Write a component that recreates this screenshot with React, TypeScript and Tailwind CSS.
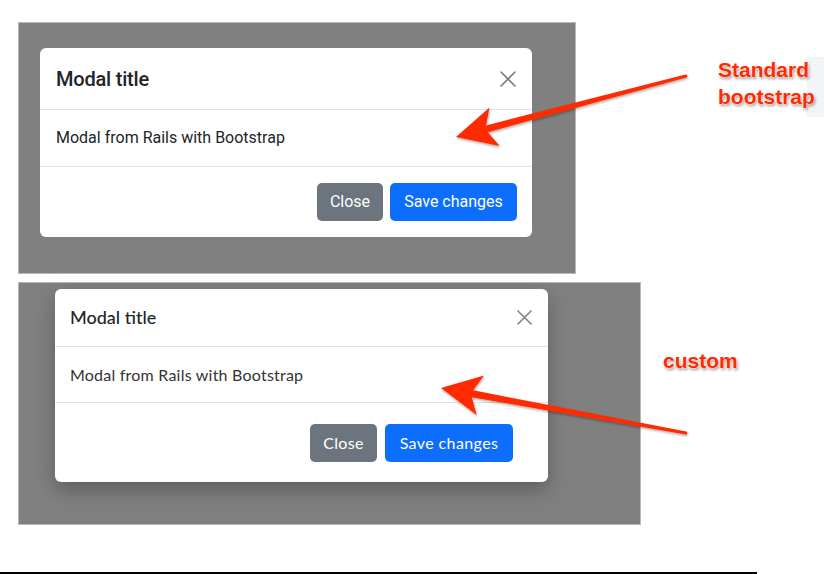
import React from "react";

function XIcon({ size = 16 }: { size?: number }) {
  return (
    <svg width={size} height={size} viewBox="0 0 16 16" fill="none">
      <path d="M1 1L15 15M15 1L1 15" stroke="#7d7d7d" strokeWidth="1.6" strokeLinecap="round" />
    </svg>
  );
}

export default function App() {
  return (
    <div className="relative w-[824px] h-[574px] bg-white overflow-hidden">
      <div className="flex flex-col pt-[22px] pl-[18px] gap-[8px]">
        {/* Standard bootstrap panel */}
        <div className="w-[558px] h-[252px] bg-[#808080] border border-[#b8b8b8] pt-[25px] pl-[21px]">
          <div className="w-[492px] h-[189px] bg-white rounded-[6px] flex flex-col text-[#212529] font-['Roboto','Liberation_Sans',sans-serif]">
            <div className="h-[62px] border-b border-[#dee2e6] flex items-center justify-between pl-4 pr-4">
              <div className="text-[20px] font-medium tracking-[-0.2px]">Modal title</div>
              <XIcon />
            </div>
            <div className="h-[57px] border-b border-[#dee2e6] flex items-center pl-4 text-[16px]">
              Modal from Rails with Bootstrap
            </div>
            <div className="flex-1 flex items-center justify-end gap-[7px] pr-[15px]">
              <div className="w-[66px] h-[38px] rounded-[5px] bg-[#6c757d] text-white text-[16px] flex items-center justify-center">Close</div>
              <div className="w-[127px] h-[38px] rounded-[5px] bg-[#0d6efd] text-white text-[16px] flex items-center justify-center">Save changes</div>
            </div>
          </div>
        </div>
        {/* custom panel */}
        <div className="w-[623px] h-[243px] bg-[#808080] border border-[#b8b8b8] pt-[6px] pl-[36px]">
          <div className="w-[493px] h-[193px] bg-white rounded-[6px] flex flex-col text-[#212529] shadow-[0_8px_20px_rgba(0,0,0,0.28)] font-['Lato','Open_Sans',sans-serif]">
            <div className="h-[58px] border-b border-[#dee2e6] flex items-center justify-between pl-[15px] pr-4">
              <div className="text-[18px] font-medium">Modal title</div>
              <XIcon size={15} />
            </div>
            <div className="h-[56px] border-b border-[#dee2e6] flex items-center pl-[15px] text-[16px] tracking-[0.22px] text-[#333]">
              Modal from Rails with Bootstrap
            </div>
            <div className="flex-1 flex items-start justify-end gap-[8px] pr-[35px] pt-[21px]">
              <div className="w-[67px] h-[38px] rounded-[5px] bg-[#6c757d] text-white text-[16px] tracking-[0.3px] flex items-center justify-center">Close</div>
              <div className="w-[128px] h-[38px] rounded-[5px] bg-[#0d6efd] text-white text-[16px] tracking-[0.4px] flex items-center justify-center">Save changes</div>
            </div>
          </div>
        </div>
      </div>
      <div className="mt-[47px] w-[757px] h-[2px] bg-black" />

      {/* faint strip at right */}
      <div className="absolute left-[807px] top-[57px] w-[17px] h-[60px] bg-[#f3f4f6]" />

      {/* arrows */}
      <svg className="absolute left-0 top-0" width="824" height="574" viewBox="0 0 824 574">
        <defs>
          <filter id="sh" x="-20%" y="-20%" width="140%" height="140%">
            <feDropShadow dx="0.5" dy="1.5" stdDeviation="1.2" floodColor="#000" floodOpacity="0.35" />
          </filter>
        </defs>
        <g filter="url(#sh)" fill="#ff2a00">
          <polygon points="456,137 489.5,107.4 486,125.4 685.5,74.6 686.3,77.5 487.8,132.2 499.8,146.1" />
          <circle cx="685.9" cy="76.1" r="1.5" />
          <polygon points="441,388 484,375.6 473.1,390.3 686.2,431.5 685.6,434.5 471.8,397.2 476.7,414.9" />
          <circle cx="685.9" cy="433" r="1.5" />
        </g>
      </svg>

      {/* labels */}
      <div
        className="absolute left-[718px] top-[56px] text-[21px] leading-[27px] font-bold text-[#ff2a00] [text-shadow:0_0_1px_#fff,0_0_2px_#fff,1px_2px_3px_rgba(0,0,0,0.45)]"
        style={{ fontFamily: "'Liberation Sans', Arial, sans-serif" }}
      >
        <div>Standard</div>
        <div>bootstrap</div>
      </div>
      <div
        className="absolute left-[663px] top-[347px] text-[21px] leading-[27px] font-bold text-[#ff2a00] [text-shadow:0_0_1px_#fff,0_0_2px_#fff,1px_2px_3px_rgba(0,0,0,0.45)]"
        style={{ fontFamily: "'Liberation Sans', Arial, sans-serif" }}
      >
        custom
      </div>
    </div>
  );
}
